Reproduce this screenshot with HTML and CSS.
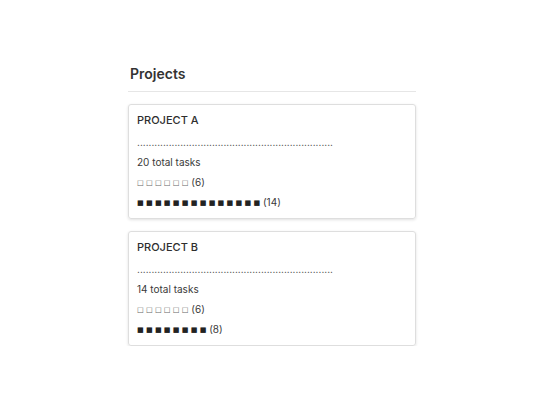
FILE: index.html
```html
<!DOCTYPE html>
<html>
<head>
<meta charset="utf-8">
<link rel="stylesheet" href="styles.css">
</head>
<body>
<main class="page">
  <h1 class="title">Projects</h1>
  <section class="card">
    <h2 class="card-title">PROJECT A</h2>
    <div class="row dots">....................................................................</div>
    <div class="row">20 total tasks</div>
    <div class="row"><span class="sq">□ □ □ □ □ □</span> (6)</div>
    <div class="row"><span class="sq filled">■ ■ ■ ■ ■ ■ ■ ■ ■ ■ ■ ■ ■ ■</span> (14)</div>
  </section>
  <section class="card">
    <h2 class="card-title">PROJECT B</h2>
    <div class="row dots">....................................................................</div>
    <div class="row">14 total tasks</div>
    <div class="row"><span class="sq">□ □ □ □ □ □</span> (6)</div>
    <div class="row"><span class="sq filled">■ ■ ■ ■ ■ ■ ■ ■</span> (8)</div>
  </section>
</main>
</body>
</html>
```
FILE: styles.css
```css
html, body {
  margin: 0;
  padding: 0;
  background: #fff;
}
body {
  font-family: Inter, "Noto Sans", sans-serif;
  color: #333;
}
.page {
  width: 288px;
  margin: 0 0 0 128px;
  padding-top: 65px;
  display: flex;
  flex-direction: column;
  gap: 12px;
}
.title {
  margin: 0;
  padding: 0 0 8px 2px;
  font-size: 14px;
  font-weight: 600;
  line-height: 18px;
  border-bottom: 1px solid #e6e6e6;
  color: #333;
}
.card {
  border: 1px solid #dedede;
  border-radius: 3px;
  box-shadow: 0 1px 3px rgba(0,0,0,0.12);
  padding: 6px 8px 6px 8px;
  display: flex;
  flex-direction: column;
}
.card-title {
  margin: 0 0 3px;
  font-size: 11px;
  font-weight: 500;
  line-height: 18px;
  color: #2e2e2e;
}
.row {
  font-size: 10px;
  line-height: 20px;
  height: 20px;
  color: #3a3a3a;
  white-space: nowrap;
}
.dots {
  color: #444;
}
.sq {
  font-family: "DejaVu Sans", sans-serif;
  font-size: 7.1px;
  color: #666;
  vertical-align: 1px;
}
.sq.filled {
  color: #222;
}
```
